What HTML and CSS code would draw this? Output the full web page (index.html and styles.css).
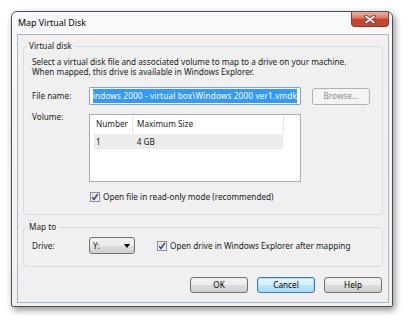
FILE: index.html
```html
<!DOCTYPE html>
<html>
    <head>
        <link rel="stylesheet" href="styles.css">
    </head>
    <body>
        <div class="desk">
            <div class="window">
                <div class="titlebar">
                    <span class="title">Map Virtual Disk</span>
                    <span class="close">
                        <svg width="12" height="9" viewBox="0 0 12 9">
                            <path d="M2 1.5 L10 7.5 M10 1.5 L2 7.5" stroke="#6b2a22" stroke-width="3.4" stroke-linecap="round"/>
                            <path d="M2 1.5 L10 7.5 M10 1.5 L2 7.5" stroke="#ffffff" stroke-width="1.8" stroke-linecap="round"/>
                        </svg>
                    </span>
                </div>
                <div class="client">
                    <fieldset class="group group-disk">
                        <legend>Virtual disk</legend>
                        <p class="intro">Select a virtual disk file and associated volume to map to a drive on your machine.<br>When mapped, this drive is available in Windows Explorer.</p>
                        <div class="form">
                            <span class="field-label">File name:</span>
                            <div class="textbox">
                                <div class="textbox-view">
                                    <span class="selection">Windows 2000 - virtual box\Windows 2000 ver1.vmdk</span>
                                </div>
                            </div>
                            <button class="btn btn-browse" disabled>Browse...</button>

                            <span class="field-label field-label-top">Volume:</span>
                            <div class="listview">
                                <div class="lv-header">
                                    <span class="lv-col lv-col-num">Number</span>
                                    <span class="lv-col lv-col-size">Maximum Size</span>
                                    <span class="lv-col lv-col-rest"></span>
                                </div>
                                <div class="lv-row">
                                    <span class="lv-cell lv-col-num">1</span>
                                    <span class="lv-cell lv-col-size">4 GB</span>
                                </div>
                            </div>

                            <label class="check check-readonly">
                                <span class="check-box">
                                    <svg width="8" height="8" viewBox="0 0 8 8"><path d="M1.2 4.2 L3 6.4 L6.9 0.9" fill="none" stroke="#2d4a8c" stroke-width="1.5"/></svg>
                                </span>
                                Open file in read-only mode (recommended)
                            </label>
                        </div>
                    </fieldset>

                    <fieldset class="group group-map">
                        <legend>Map to</legend>
                        <div class="drive-row">
                            <span class="field-label">Drive:</span>
                            <div class="combo">
                                <span class="combo-value">Y:</span>
                                <span class="combo-arrow"></span>
                            </div>
                            <label class="check check-explorer">
                                <span class="check-box">
                                    <svg width="8" height="8" viewBox="0 0 8 8"><path d="M1.2 4.2 L3 6.4 L6.9 0.9" fill="none" stroke="#2d4a8c" stroke-width="1.5"/></svg>
                                </span>
                                Open drive in Windows Explorer after mapping
                            </label>
                        </div>
                    </fieldset>

                    <div class="actions">
                        <button class="btn">OK</button>
                        <button class="btn btn-default">Cancel</button>
                        <button class="btn">Help</button>
                    </div>
                </div>
            </div>
        </div>
    </body>
</html>
```

FILE: styles.css
```css
* {
    box-sizing: border-box;
    font-family: 'Noto Sans', 'Liberation Sans', sans-serif;
    font-size: 8.2px;
}

body {
    margin: 0;
    background: #ffffff;
    color: #1a1a1a;
}

.desk {
    width: 408px;
    height: 322px;
    padding: 11px 0 0 11px;
}

/* window frame */

.window {
    width: 382px;
    border: 1px solid #4d4f52;
    border-radius: 6px 6px 2px 2px;
    background: linear-gradient(#f8f9fa, #eef0f2);
    box-shadow: 2px 3px 7px rgba(0, 0, 0, 0.45);
}

.titlebar {
    display: flex;
    justify-content: space-between;
    align-items: flex-start;
    height: 22px;
}

.title {
    padding-left: 6px;
    line-height: 22px;
    font-size: 8.9px;
    color: #000000;
}

.close {
    display: flex;
    align-items: center;
    justify-content: center;
    width: 38px;
    height: 15px;
    margin-right: 3px;
    border: 1px solid #8e3a2e;
    border-top: none;
    border-radius: 0 0 4px 4px;
    background: linear-gradient(#eab3a6 0%, #dc7e6a 40%, #c9432c 55%, #c24a33 100%);
}

.client {
    margin: 0 3px 3px 5px;
    padding: 0 0 9px 0;
    border: 1px solid #aeb6bf;
    background: #f0f0f0;
}

/* group boxes */

.group {
    margin: 0 5px;
    padding: 0 8px 12px 8px;
    border: 1px solid #d7dde2;
    border-radius: 3px;
    min-inline-size: 0;
}

.group legend {
    margin-left: -5px;
    padding: 0 2px;
    line-height: 12px;
}

.group-disk {
    margin-top: 5px;
}

.group-map {
    margin-top: 6px;
}

.intro {
    margin: 5px 0 0 0;
    line-height: 10px;
    white-space: nowrap;
}

.form {
    display: grid;
    grid-template-columns: 57px 212px 70px;
    grid-template-rows: 18px 68px 11px;
    row-gap: 9px;
    margin-top: 10px;
}

.field-label {
    align-self: center;
    line-height: 10px;
}

.field-label-top {
    align-self: start;
    margin-top: -2px;
}

/* text box with selected text, scrolled to its end */

.textbox {
    border: 1px solid #7fa6cf;
    border-radius: 1px;
    background: #ffffff;
    padding: 1px 3px;
}

.textbox-view {
    display: flex;
    justify-content: flex-end;
    overflow: hidden;
    white-space: nowrap;
    height: 14px;
}

.selection {
    flex-shrink: 0;
    line-height: 14px;
    letter-spacing: 0.15px;
    background: #3399ff;
    color: #ffffff;
}

/* buttons */

.btn {
    height: 16px;
    padding: 0;
    border: 1px solid #707070;
    border-radius: 3px;
    background: linear-gradient(#f2f2f2 0%, #ebebeb 50%, #dddddd 51%, #cfcfcf 100%);
    color: #000000;
    line-height: 14px;
}

.btn-browse {
    align-self: center;
    width: 58px;
    height: 17px;
    margin-left: 11px;
    border-color: #adb2b5;
    background: #f4f4f4;
    color: #8d8d8d;
}

.btn-default {
    border-color: #3c7fb1;
    background: linear-gradient(#eaf6fd 0%, #d9f0fc 50%, #bee6fd 51%, #a7d9f5 100%);
    box-shadow: inset 0 0 0 1px #a8dcf8;
}

.actions {
    display: flex;
    justify-content: flex-end;
    gap: 9px;
    margin: 10px 6px 0 0;
}

.actions .btn {
    width: 58px;
}

/* list view */

.listview {
    border: 1px solid #a5acb5;
    background: #ffffff;
}

.lv-header {
    display: flex;
    height: 18px;
}

.lv-col {
    line-height: 18px;
    border-right: 1px solid #e5e5e5;
}

.lv-col-num {
    width: 43px;
    padding-left: 6px;
}

.lv-col-size {
    width: 151px;
    padding-left: 4px;
}

.lv-col-rest {
    flex: 1;
    border-right: none;
}

.lv-row {
    display: flex;
    width: 189px;
    height: 15px;
    margin: 1px 0 0 4px;
    background: #ececec;
}

.lv-row .lv-cell {
    line-height: 15px;
}

.lv-row .lv-col-num {
    width: 39px;
    padding-left: 2px;
}

/* check boxes */

.check {
    display: flex;
    align-items: center;
    gap: 3px;
    line-height: 11px;
    white-space: nowrap;
}

.check-readonly {
    grid-column: 2 / 4;
    padding-left: 1px;
}

.check-box {
    display: flex;
    align-items: center;
    justify-content: center;
    width: 10px;
    height: 10px;
    border: 1px solid #8f8f8f;
    background: linear-gradient(135deg, #cbcfd5, #f6f6f6);
    box-shadow: inset 0 0 0 1px #f4f4f4;
}

/* drive row */

.drive-row {
    display: flex;
    align-items: center;
    margin-top: 4px;
    height: 17px;
}

.drive-row .field-label {
    width: 57px;
}

.combo {
    display: flex;
    align-items: center;
    justify-content: space-between;
    width: 46px;
    height: 17px;
    padding: 0 4px 0 3px;
    border: 1px solid #707070;
    border-radius: 3px;
    background: linear-gradient(#f2f2f2 0%, #ebebeb 50%, #dddddd 51%, #cfcfcf 100%);
}

.combo-arrow {
    width: 0;
    height: 0;
    border-left: 3.5px solid transparent;
    border-right: 3.5px solid transparent;
    border-top: 4px solid #000000;
}

.check-explorer {
    margin-left: 22px;
}
```
